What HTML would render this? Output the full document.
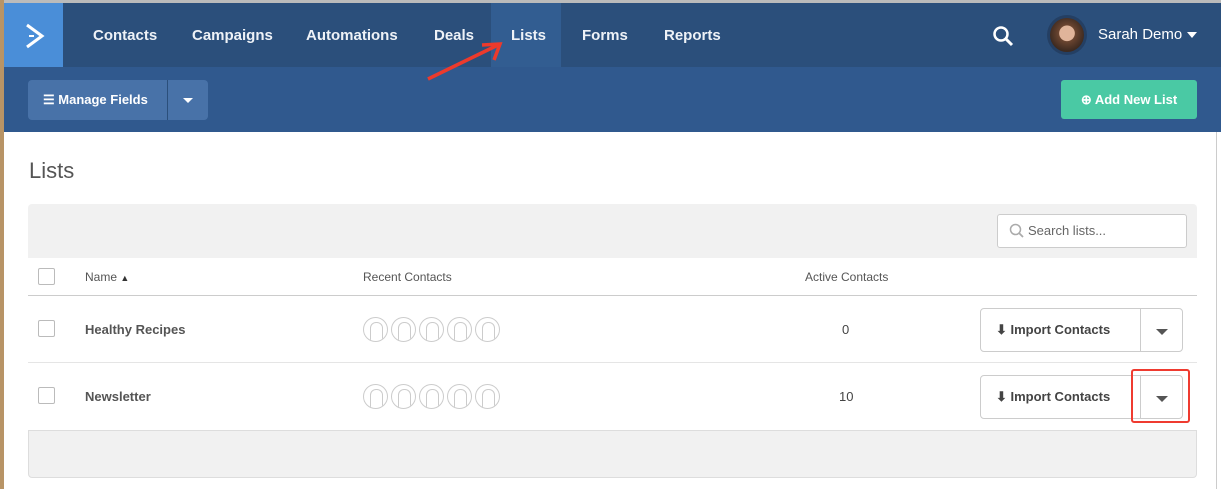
<!DOCTYPE html>
<html><head><meta charset="utf-8"><style>
*{margin:0;padding:0;box-sizing:border-box}
body{width:1221px;height:489px;overflow:hidden;background:#fff;font-family:"Liberation Sans",sans-serif;position:relative}
.abs{position:absolute}
.nav{left:4px;top:3px;width:1217px;height:64px;background:#2b4f7b}
.navt{top:3px;height:64px;line-height:66px;color:#eef2f7;font-weight:bold;font-size:15px}
.sub{left:4px;top:67px;width:1217px;height:65px;background:#30598e}
.th{color:#555;font-size:12px}
.cb{width:17px;height:17px;border:1px solid #bbb;border-radius:2px;background:#fff}
.name{font-weight:bold;color:#555;font-size:13px}
.btn{width:203px;height:44px;border:1px solid #ccc;border-radius:4px;background:#fff}
.av{width:25px;height:25px;border:1px solid #ccc;border-radius:50%;position:relative;overflow:hidden}
.av::after{content:"";position:absolute;left:6px;top:4px;width:11px;height:18px;border:1px solid #ccc;border-radius:6px 6px 2px 2px}
</style></head><body>
<div class="abs" style="left:0;top:0;width:1221px;height:3px;background:#bbb"></div>
<div class="abs" style="left:0;top:0;width:4px;height:489px;background:#b89466"></div>
<div class="abs nav"></div>
<div class="abs" style="left:4px;top:3px;width:59px;height:64px;background:#4a8ed8"></div>
<svg class="abs" style="left:24px;top:21px" width="22" height="30" viewBox="0 0 22 30"><path d="M3 4 L18 15 L3 26" stroke="#fff" stroke-width="3" fill="none"/><path d="M5 15 L10 15" stroke="#fff" stroke-width="2"/></svg>
<div class="abs" style="left:491px;top:3px;width:70px;height:64px;background:#325d91"></div>
<div class="abs navt" style="left:93px">Contacts</div>
<div class="abs navt" style="left:192px">Campaigns</div>
<div class="abs navt" style="left:306px">Automations</div>
<div class="abs navt" style="left:434px">Deals</div>
<div class="abs navt" style="left:511px">Lists</div>
<div class="abs navt" style="left:582px">Forms</div>
<div class="abs navt" style="left:664px">Reports</div>
<svg class="abs" style="left:992px;top:25px" width="22" height="22" viewBox="0 0 22 22"><circle cx="9" cy="9" r="6.5" stroke="#fff" stroke-width="2.5" fill="none"/><path d="M14 14 L20 20" stroke="#fff" stroke-width="3"/></svg>
<div class="abs" style="left:1047px;top:15px;width:40px;height:40px;border-radius:50%;background:#243f63"></div>
<div class="abs" style="left:1050px;top:18px;width:34px;height:34px;border-radius:50%;background:radial-gradient(circle at 50% 45%,#e0b49a 0 30%,#6b4530 32%,#3d2a20 70%)"></div>
<div class="abs" style="left:1098px;top:3px;height:64px;line-height:64px;color:#fff;font-size:15px">Sarah Demo</div>
<div class="abs" style="left:1187px;top:32px;border:5px solid transparent;border-top:6px solid #fff"></div>
<div class="abs sub"></div>
<div class="abs" style="left:28px;top:80px;width:180px;height:40px;background:#4872a8;border-radius:4px"></div>
<div class="abs" style="left:167px;top:80px;width:1px;height:40px;background:#2b4f7b"></div>
<div class="abs" style="left:43px;top:80px;line-height:40px;color:#fff;font-weight:bold;font-size:13px">☰ Manage Fields</div>
<div class="abs" style="left:183px;top:98px;border:5px solid transparent;border-top:5px solid #fff"></div>
<svg class="abs" style="left:424px;top:40px" width="80" height="42"><path d="M4 39 L74 5" stroke="#ec3a2c" stroke-width="3.5"/><path d="M58 5 L76 4 L70 20" stroke="#ec3a2c" stroke-width="3.5" fill="none"/></svg>
<div class="abs" style="left:1061px;top:80px;width:136px;height:39px;background:#4ac9a4;border-radius:3px;color:#fff;font-weight:bold;font-size:13px;line-height:39px;text-align:center">⊕ Add New List</div>
<div class="abs" style="left:29px;top:158px;font-size:22px;color:#555">Lists</div>
<div class="abs" style="left:28px;top:204px;width:1169px;height:54px;background:#f1f1f1;border-radius:4px 4px 0 0"></div>
<div class="abs" style="left:997px;top:214px;width:190px;height:34px;background:#fff;border:1px solid #ccc;border-radius:3px;color:#666;font-size:13px;line-height:32px;padding-left:30px">Search lists...</div>
<svg class="abs" style="left:1009px;top:223px" width="16" height="16"><circle cx="6.5" cy="6.5" r="5" stroke="#aaa" stroke-width="1.5" fill="none"/><path d="M10 10 L14 14" stroke="#aaa" stroke-width="1.8"/></svg>
<div class="abs" style="left:28px;top:295px;width:1169px;height:1px;background:#ccc"></div>
<div class="abs" style="left:28px;top:362px;width:1169px;height:1px;background:#e5e5e5"></div>
<div class="abs cb" style="left:38px;top:268px"></div>
<div class="abs th" style="left:85px;top:270px">Name <span style="font-size:9px;color:#333">▲</span></div>
<div class="abs th" style="left:363px;top:270px">Recent Contacts</div>
<div class="abs th" style="left:805px;top:270px">Active Contacts</div>
<div class="abs cb" style="left:38px;top:320px"></div>
<div class="abs name" style="left:85px;top:322px">Healthy Recipes</div>
<div class="abs cb" style="left:38px;top:387px"></div>
<div class="abs name" style="left:85px;top:389px">Newsletter</div>
<div class="abs" style="left:363px;top:317px;display:flex;gap:3px"><div class="av"></div><div class="av"></div><div class="av"></div><div class="av"></div><div class="av"></div></div>
<div class="abs" style="left:363px;top:384px;display:flex;gap:3px"><div class="av"></div><div class="av"></div><div class="av"></div><div class="av"></div><div class="av"></div></div>
<div class="abs" style="left:842px;top:322px;font-size:13px;color:#444">0</div>
<div class="abs" style="left:839px;top:389px;font-size:13px;color:#444">10</div>
<div class="abs btn" style="left:980px;top:308px"></div>
<div class="abs" style="left:1140px;top:308px;width:1px;height:44px;background:#ccc"></div>
<div class="abs" style="left:996px;top:308px;line-height:44px;font-size:13px;color:#444;font-weight:bold">⬇ Import Contacts</div>
<div class="abs" style="left:1156px;top:329px;border:6px solid transparent;border-top:6px solid #555"></div>
<div class="abs btn" style="left:980px;top:375px"></div>
<div class="abs" style="left:1140px;top:375px;width:1px;height:44px;background:#ccc"></div>
<div class="abs" style="left:996px;top:375px;line-height:44px;font-size:13px;color:#444;font-weight:bold">⬇ Import Contacts</div>
<div class="abs" style="left:1156px;top:396px;border:6px solid transparent;border-top:6px solid #555"></div>
<div class="abs" style="left:1131px;top:369px;width:59px;height:54px;border:2.5px solid #ef3b30;border-radius:3px"></div>
<div class="abs" style="left:28px;top:430px;width:1169px;height:48px;background:#f1f1f1;border:1px solid #ddd;border-radius:0 0 4px 4px"></div>
<div class="abs" style="left:1216px;top:132px;width:1px;height:357px;background:#ccc"></div>
</body></html>
